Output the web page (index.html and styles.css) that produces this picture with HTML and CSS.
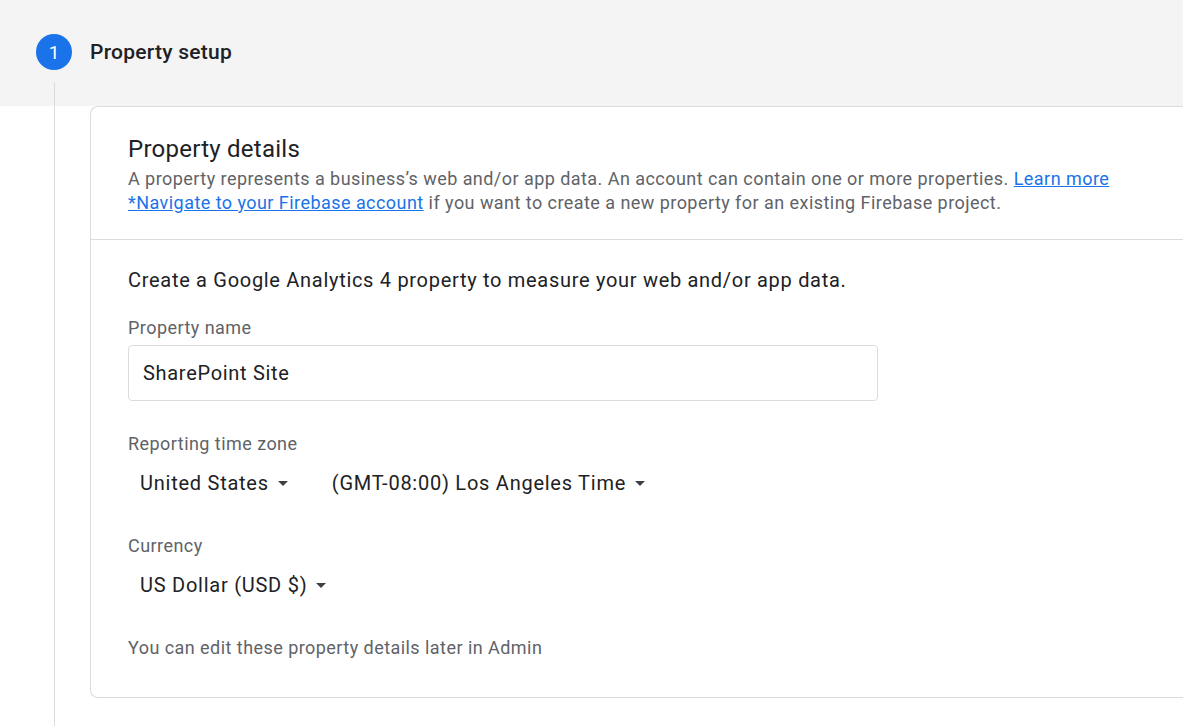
FILE: index.html
```html
<!DOCTYPE html>
<html lang="en">
<head>
    <meta charset="UTF-8">
    <meta name="viewport" content="width=device-width, initial-scale=1.0">
    <title>Property setup</title>
    <link rel="stylesheet" href="styles.css">
</head>
<body>

    <!-- Intestazione del passo -->
    <div class="step-header">
        <div class="step-number">1</div>
        <h2 class="step-title">Property setup</h2>
    </div>

    <div class="step-body">
        <div class="step-line"></div>

        <div class="card">
            <div class="card-head">
                <h3>Property details</h3>
                <p>A property represents a business’s web and/or app data. An account can contain one or more properties. <a href="#">Learn more</a><br>
                <a href="#">*Navigate to your Firebase account</a> if you want to create a new property for an existing Firebase project.</p>
            </div>

            <div class="card-content">
                <p class="intro">Create a Google Analytics 4 property to measure your web and/or app data.</p>

                <div class="field field-input">
                    <label class="label">Property name</label>
                    <div class="text-input">SharePoint Site</div>
                </div>

                <div class="field">
                    <label class="label">Reporting time zone</label>
                    <div class="selects">
                        <div class="select">United States <span class="arrow"></span></div>
                        <div class="select">(GMT-08:00) Los Angeles Time <span class="arrow"></span></div>
                    </div>
                </div>

                <div class="field">
                    <label class="label">Currency</label>
                    <div class="selects">
                        <div class="select">US Dollar (USD $) <span class="arrow"></span></div>
                    </div>
                </div>

                <p class="note">You can edit these property details later in Admin</p>
            </div>
        </div>
    </div>

</body>
</html>
```

FILE: styles.css
```css
/* Stile di base */
html, body {
    height: 100%;
}
body {
    font-family: Roboto, "Liberation Sans", sans-serif;
    background-color: #fff;
    color: #202124;
    margin: 0;
    overflow: hidden;
}

.step-header {
    background-color: #f4f4f4;
    height: 106px;
    display: flex;
    align-items: center;
    padding-left: 36px;
    box-sizing: border-box;
    padding-bottom: 2px;
}
.step-number {
    width: 36px;
    height: 36px;
    border-radius: 50%;
    background-color: #1a73e8;
    color: #fff;
    font-size: 19px;
    display: flex;
    align-items: center;
    justify-content: center;
}
.step-title {
    margin: 0 0 0 18px;
    font-size: 21px;
    letter-spacing: 0.25px;
    font-weight: 500;
    color: #202124;
}

.step-body {
    display: flex;
    position: relative;
}
.step-line {
    position: absolute;
    left: 54px;
    top: -24px;
    width: 1px;
    height: 644px;
    background-color: #dadce0;
}

.card {
    margin-left: 90px;
    flex: 1;
    border: 1px solid #dadce0;
    border-right: none;
    border-radius: 8px 0 0 8px;
    background-color: #fff;
}

.card-head {
    padding: 27px 38px 24px 37px;
    border-bottom: 1px solid #dadce0;
}
.card-head h3 {
    margin: 0 0 3px;
    font-size: 24px;
    letter-spacing: 0.25px;
    font-weight: 400;
    color: #202124;
    line-height: 30px;
}
.card-head p {
    margin: 0;
    font-size: 18px;
    letter-spacing: 0.45px;
    line-height: 24px;
    color: #5f6368;
}
a {
    color: #1a73e8;
}

.card-content {
    padding: 26px 38px 37px 37px;
}
.intro {
    margin: 0 0 22px;
    font-size: 20px;
    letter-spacing: 0.7px;
    line-height: 28px;
}
.field {
    margin-bottom: 27px;
}
.field-input {
    margin-bottom: 31px;
}
.label {
    display: block;
    font-size: 18px;
    letter-spacing: 0.45px;
    line-height: 24px;
    color: #5f6368;
    margin-bottom: 5px;
}
.text-input {
    width: 750px;
    height: 56px;
    box-sizing: border-box;
    border: 1px solid #dadce0;
    border-radius: 4px;
    padding: 0 14px;
    display: flex;
    align-items: center;
    font-size: 20px;
    letter-spacing: 0.7px;
}
.selects {
    display: flex;
    gap: 20px;
    margin-top: -2px;
}
.select {
    display: flex;
    align-items: center;
    gap: 9px;
    height: 48px;
    padding: 0 12px;
    font-size: 20px;
    letter-spacing: 0.75px;
}
.arrow {
    width: 0;
    height: 0;
    border-left: 5px solid transparent;
    border-right: 5px solid transparent;
    border-top: 5px solid #3c4043;
}
.note {
    margin: 0;
    font-size: 18px;
    letter-spacing: 0.45px;
    line-height: 24px;
    color: #5f6368;
}
```
